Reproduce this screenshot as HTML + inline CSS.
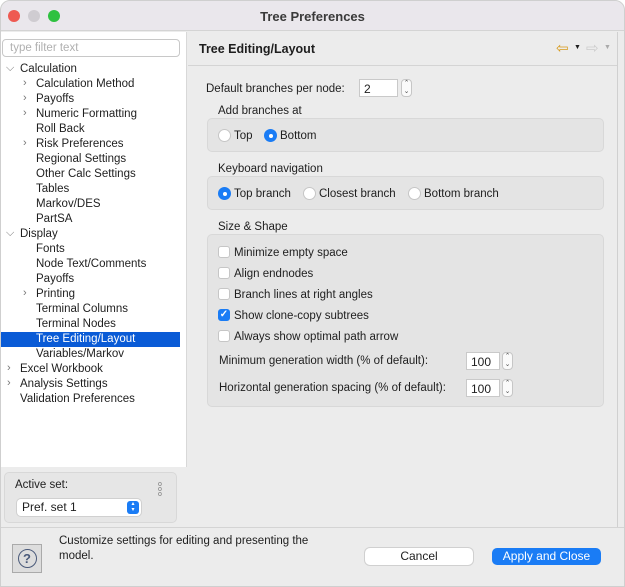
<!DOCTYPE html>
<html><head><meta charset="utf-8"><style>
*{box-sizing:border-box;margin:0;padding:0}
body{width:625px;height:587px;background:#fff;font-family:"Liberation Sans",sans-serif;font-size:11.5px;color:#1e1e1e;position:relative;overflow:hidden}
.win{position:absolute;left:0;top:0;width:625px;height:587px;background:#ececec;border-radius:10px 10px 0 0;border:1px solid #cfcfcf}
.title{position:absolute;left:0;top:0;width:623px;height:30px;background:#eae7ec;border-bottom:1px solid #d4d4d4;border-radius:10px 10px 0 0}
.title .t{position:absolute;left:0;width:100%;top:8px;text-align:center;font-weight:bold;font-size:13px;color:#3a3a3a}
.dot{position:absolute;top:9px;width:12px;height:12px;border-radius:50%}
.left{position:absolute;left:0;top:31px;width:186px;height:495px;background:#fff;border-right:1px solid #d8d8d8}
.filter{position:absolute;left:1px;top:38px;width:178px;height:18px;border:1px solid #c8c8c8;border-radius:4px;background:#fff;color:#b0b0b0;padding:2px 7px;font-size:11.5px}
.it{position:absolute;white-space:nowrap;font-size:11.5px;height:15px;line-height:15px}
.ch{position:absolute;color:#777;font-size:11px}
.sel{position:absolute;left:0;top:331px;width:179px;height:15px;background:#0a5bd6}
.right{position:absolute;left:186px;top:31px;width:431px;height:495px;background:#ececec;border-right:1px solid #d0d0d0}
.box{position:absolute;background:#e4e4e4;border:1px solid #d8d8d8;border-radius:5px}
.rad{position:absolute;width:13px;height:13px;border-radius:50%;background:#fff;border:1px solid #c6c6c6}
.rad.on{background:#1a7cf5;border-color:#1a7cf5}
.rad.on:after{content:"";position:absolute;left:3.5px;top:3.5px;width:4px;height:4px;border-radius:50%;background:#fff}
.cb{position:absolute;width:12px;height:12px;border-radius:3px;background:#fff;border:1px solid #c6c6c6}
.num{position:absolute;height:18px;background:#fff;border:1px solid #c9c9c9;padding:2px 4px;font-size:12px}
.spin{position:absolute;width:11px;height:18px;border:1px solid #c6c6c6;border-radius:4px;background:#fafafa;font-size:7px;line-height:8px;text-align:center;color:#555}
.btn{position:absolute;height:17px;border-radius:5px;text-align:center;line-height:17px;font-size:12px}
</style></head><body>
<div class="win">
<div class="title"><div class="dot" style="left:7px;background:#ee5a52"></div><div class="dot" style="left:27px;background:#cfccd1"></div><div class="dot" style="left:47px;background:#2fc140"></div><div class="t">Tree Preferences</div></div>
<div class="left"></div>
<div class="filter">type filter text</div>
<div class="ch" style="left:5px;top:61px">⌵</div><div class="it" style="left:19px;top:61px">Calculation</div>
<div class="ch" style="left:22px;top:76px">›</div><div class="it" style="left:35px;top:76px">Calculation Method</div>
<div class="ch" style="left:22px;top:91px">›</div><div class="it" style="left:35px;top:91px">Payoffs</div>
<div class="ch" style="left:22px;top:106px">›</div><div class="it" style="left:35px;top:106px">Numeric Formatting</div>
<div class="it" style="left:35px;top:121px">Roll Back</div>
<div class="ch" style="left:22px;top:136px">›</div><div class="it" style="left:35px;top:136px">Risk Preferences</div>
<div class="it" style="left:35px;top:151px">Regional Settings</div>
<div class="it" style="left:35px;top:166px">Other Calc Settings</div>
<div class="it" style="left:35px;top:181px">Tables</div>
<div class="it" style="left:35px;top:196px">Markov/DES</div>
<div class="it" style="left:35px;top:211px">PartSA</div>
<div class="ch" style="left:5px;top:226px">⌵</div><div class="it" style="left:19px;top:226px">Display</div>
<div class="it" style="left:35px;top:241px">Fonts</div>
<div class="it" style="left:35px;top:256px">Node Text/Comments</div>
<div class="it" style="left:35px;top:271px">Payoffs</div>
<div class="ch" style="left:22px;top:286px">›</div><div class="it" style="left:35px;top:286px">Printing</div>
<div class="it" style="left:35px;top:301px">Terminal Columns</div>
<div class="it" style="left:35px;top:316px">Terminal Nodes</div>
<div class="sel"></div><div class="it" style="left:35px;top:331px;color:#fff">Tree Editing/Layout</div>
<div class="it" style="left:35px;top:346px">Variables/Markov</div>
<div class="ch" style="left:6px;top:361px">›</div><div class="it" style="left:19px;top:361px">Excel Workbook</div>
<div class="ch" style="left:6px;top:376px">›</div><div class="it" style="left:19px;top:376px">Analysis Settings</div>
<div class="it" style="left:19px;top:391px">Validation Preferences</div>
<div style="position:absolute;left:0;top:466px;width:186px;height:60px;background:#ececec"></div>
<div class="box" style="left:3px;top:471px;width:173px;height:51px;background:#e6e6e6"></div>
<div class="it" style="left:14px;top:477px">Active set:</div>
<div style="position:absolute;left:157px;top:481px;font-size:7px;line-height:5px;color:#777">o<br>o<br>o</div>
<div style="position:absolute;left:16px;top:498px;width:124px;height:17px;background:#fff;border-radius:4px;box-shadow:0 0 0 1px #d0d0d0;padding:1px 5px;font-size:12px">Pref. set 1</div>
<div style="position:absolute;left:126px;top:500px;width:12px;height:13px;background:#1a7cf5;border-radius:3px;color:#fff;font-size:6px;line-height:6px;text-align:center">▴<br>▾</div>
<div class="right"></div>
<div style="position:absolute;left:198px;top:41px;font-weight:bold;font-size:12.5px">Tree Editing/Layout</div>
<div style="position:absolute;left:555px;top:38px;color:#d79a1a;font-size:15px">⇦</div><div style="position:absolute;left:573px;top:43px;font-size:7px">▼</div>
<div style="position:absolute;left:585px;top:38px;color:#ccc;font-size:15px">⇨</div><div style="position:absolute;left:603px;top:43px;font-size:7px;color:#aaa">▼</div>
<div style="position:absolute;left:187px;top:64px;width:429px;height:1px;background:#d4d4d4"></div>
<div class="it" style="left:205px;top:81px">Default branches per node:</div>
<div class="num" style="left:358px;top:78px;width:39px">2</div>
<div class="spin" style="left:400px;top:78px">⌃<br>⌄</div>
<div class="it" style="left:217px;top:103px">Add branches at</div>
<div class="box" style="left:206px;top:117px;width:397px;height:34px"></div>
<div class="rad" style="left:217px;top:128px"></div><div class="it" style="left:233px;top:128px">Top</div>
<div class="rad on" style="left:263px;top:128px"></div><div class="it" style="left:279px;top:128px">Bottom</div>
<div class="it" style="left:217px;top:161px">Keyboard navigation</div>
<div class="box" style="left:206px;top:175px;width:397px;height:34px"></div>
<div class="rad on" style="left:217px;top:186px"></div><div class="it" style="left:233px;top:186px">Top branch</div>
<div class="rad" style="left:302px;top:186px"></div><div class="it" style="left:318px;top:186px">Closest branch</div>
<div class="rad" style="left:407px;top:186px"></div><div class="it" style="left:423px;top:186px">Bottom branch</div>
<div class="it" style="left:217px;top:219px">Size &amp; Shape</div>
<div class="box" style="left:206px;top:233px;width:397px;height:173px"></div>
<div class="cb" style="left:217px;top:245px"></div><div class="it" style="left:233px;top:245px">Minimize empty space</div>
<div class="cb" style="left:217px;top:266px"></div><div class="it" style="left:233px;top:266px">Align endnodes</div>
<div class="cb" style="left:217px;top:287px"></div><div class="it" style="left:233px;top:287px">Branch lines at right angles</div>
<div class="cb" style="left:217px;top:308px;background:#1a7cf5;border-color:#1a7cf5;color:#fff;font-size:10px;line-height:10px;text-align:center;font-weight:bold">✓</div><div class="it" style="left:233px;top:308px">Show clone-copy subtrees</div>
<div class="cb" style="left:217px;top:329px"></div><div class="it" style="left:233px;top:329px">Always show optimal path arrow</div>
<div class="it" style="left:218px;top:353px">Minimum generation width (% of default):</div>
<div class="num" style="left:465px;top:351px;width:34px">100</div><div class="spin" style="left:501px;top:351px">⌃<br>⌄</div>
<div class="it" style="left:218px;top:380px">Horizontal generation spacing (% of default):</div>
<div class="num" style="left:465px;top:378px;width:34px">100</div><div class="spin" style="left:501px;top:378px">⌃<br>⌄</div>
<div style="position:absolute;left:0;top:526px;width:623px;height:1px;background:#d4d4d4"></div>
<div style="position:absolute;left:11px;top:543px;width:30px;height:29px;border:1px solid #aaa;background:#ddd;text-align:center"><div style="margin:4px auto;width:19px;height:19px;border:1.5px solid #4a5a7a;border-radius:50%;font-size:13px;font-weight:bold;color:#4a5a7a;line-height:17px">?</div></div>
<div class="it" style="left:58px;top:533px;line-height:14.5px;height:auto">Customize settings for editing and presenting the<br>model.</div>
<div class="btn" style="left:364px;top:547px;width:108px;background:#fff;box-shadow:0 0 0 1px #d0d0d0">Cancel</div>
<div class="btn" style="left:491px;top:547px;width:109px;background:#1a7cf5;color:#fff">Apply and Close</div>
</div>
</body></html>
